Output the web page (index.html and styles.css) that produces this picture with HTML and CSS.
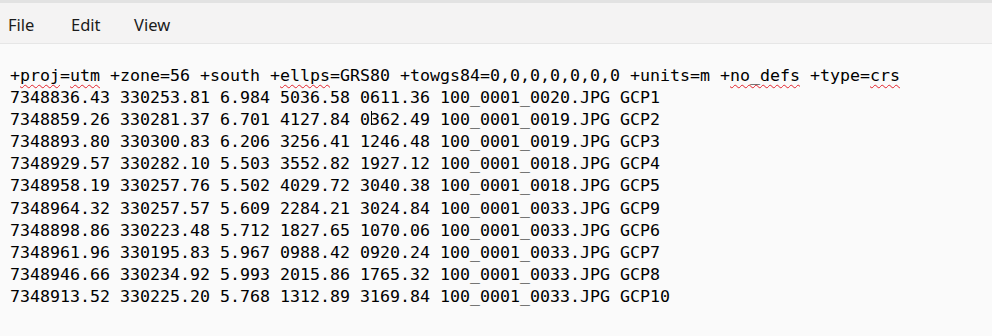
FILE: index.html
```html
<!DOCTYPE html>
<html lang="en">
<head>
<meta charset="utf-8">
<title>gcp_list.txt - Notepad</title>
<link rel="stylesheet" href="styles.css">
</head>
<body>
<div class="window">
  <div class="top-edge"></div>
  <nav class="menubar">
    <span class="menu-item">File</span>
    <span class="menu-item">Edit</span>
    <span class="menu-item">View</span>
  </nav>
  <div class="editor">
    <div class="line">+<span class="misspelled">proj</span>=<span class="misspelled">utm</span> +zone=56 +south +<span class="misspelled">ellps</span>=GRS80 +towgs84=0,0,0,0,0,0,0 +units=m +<span class="misspelled">no_defs</span> +type=<span class="misspelled">crs</span></div>
    <div class="line">7348836.43 330253.81 6.984 5036.58 0611.36 100_0001_0020.JPG GCP1</div>
    <div class="line">7348859.26 330281.37 6.701 4127.84 0<span class="caret"></span>362.49 100_0001_0019.JPG GCP2</div>
    <div class="line">7348893.80 330300.83 6.206 3256.41 1246.48 100_0001_0019.JPG GCP3</div>
    <div class="line">7348929.57 330282.10 5.503 3552.82 1927.12 100_0001_0018.JPG GCP4</div>
    <div class="line">7348958.19 330257.76 5.502 4029.72 3040.38 100_0001_0018.JPG GCP5</div>
    <div class="line">7348964.32 330257.57 5.609 2284.21 3024.84 100_0001_0033.JPG GCP9</div>
    <div class="line">7348898.86 330223.48 5.712 1827.65 1070.06 100_0001_0033.JPG GCP6</div>
    <div class="line">7348961.96 330195.83 5.967 0988.42 0920.24 100_0001_0033.JPG GCP7</div>
    <div class="line">7348946.66 330234.92 5.993 2015.86 1765.32 100_0001_0033.JPG GCP8</div>
    <div class="line">7348913.52 330225.20 5.768 1312.89 3169.84 100_0001_0033.JPG GCP10</div>
  </div>
</div>
</body>
</html>
```

FILE: styles.css
```css
html, body {
  margin: 0;
  padding: 0;
  background: #fafafa;
}

.window {
  width: 992px;
  height: 336px;
  overflow: hidden;
  display: flex;
  flex-direction: column;
  background: #fafafa;
}

.top-edge {
  height: 3px;
  flex: none;
  background: #e2e2e2;
}

.menubar {
  flex: none;
  height: 40px;
  display: flex;
  padding-left: 8px;
  background: #f4f3f3;
  border-bottom: 1px solid #e6e6e6;
  font-family: "Noto Sans", "Open Sans", sans-serif;
  font-size: 16.5px;
  color: #1b1b1b;
}

.menu-item {
  width: 63px;
  padding-top: 4px;
  line-height: 36px;
}

.editor {
  flex: 1;
  padding: 21px 0 0 10px;
  background: #fafafa;
  font-family: "DejaVu Sans Mono", "Liberation Mono", monospace;
  font-size: 16.61px;
  line-height: 22.1px;
  color: #000;
}

.line {
  white-space: pre;
  height: 22.1px;
}

.misspelled {
  text-decoration: underline wavy #e2222b;
  text-decoration-thickness: 1px;
  text-underline-offset: 3px;
  text-decoration-skip-ink: none;
}

.caret {
  position: relative;
}

.caret::after {
  content: "";
  position: absolute;
  left: 1px;
  top: 1px;
  width: 1px;
  height: 14px;
  background: #000;
}
```
